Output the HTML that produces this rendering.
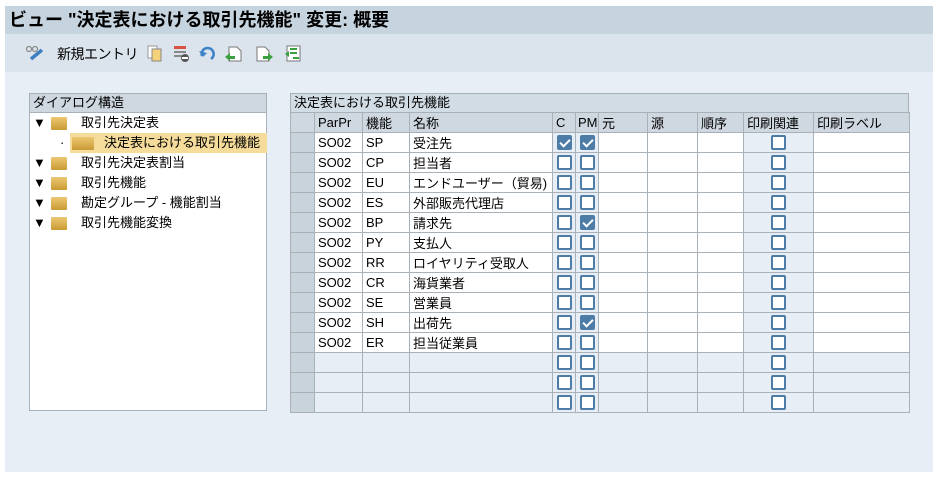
<!DOCTYPE html><html><head><meta charset="utf-8"><style>
*{box-sizing:border-box;margin:0;padding:0}
body{width:940px;height:487px;background:#fff;font-family:"Liberation Sans","Noto Sans CJK JP",sans-serif;position:relative;overflow:hidden;font-size:13px;color:#000}
.main{position:absolute;left:5px;top:6px;width:928px;height:466px;background:#e8eef5}
.title{position:absolute;left:5px;top:6px;width:928px;height:28px;background:#c6d4e0;font-weight:bold;font-size:18px;line-height:28px;padding-left:4px}
.tb{position:absolute;left:5px;top:34px;width:928px;height:38px;background:#dbe4ec}
.lp{position:absolute;left:29px;top:93px;width:238px;height:318px;background:#fff;border:1px solid #a9b1b8}
.lh{height:19px;background:#cfd8e0;border-bottom:1px solid #a9b1b8;line-height:18px;padding-left:3px}
.tr{position:absolute;height:20px;line-height:20px;white-space:nowrap}
.fold{position:absolute;width:16px;height:13px;background:linear-gradient(#ecc872,#c99a35);border-radius:1px;top:4px}
.rp{position:absolute;left:290px;top:93px;width:619px}
.rh{height:19px;background:#d2dce5;border:1px solid #a9b1b8;border-bottom:none;line-height:18px;padding-left:3px}
table{border-collapse:collapse;table-layout:fixed;width:619px}
td{border:1px solid #a9b1b8;height:20px;padding:0 3px;white-space:nowrap;overflow:hidden;background:#fff}
tr.h td{height:19px;background:#cfd8e0}
td.s{background:#c9d3dc}
td.c{background:#e8eef5;text-align:center;padding:0}
tr.e td{background:#e8eef5}
tr.e td.s{background:#c9d3dc}
.cb{display:inline-block;width:15px;height:15px;border:2px solid #4d7ca6;border-radius:2px;vertical-align:middle;margin-top:-2px;background:#fff}
.ck{background:#4d7ca6;position:relative}
.ck:after{content:"";position:absolute;left:3px;top:0px;width:4px;height:8px;border:solid #fff;border-width:0 2px 2px 0;transform:rotate(45deg)}
</style></head><body>
<div class="main"></div>
<div class="title">ビュー "決定表における取引先機能" 変更: 概要</div>
<div class="tb">
<svg style="position:absolute;left:20px;top:11px" width="22" height="16"><circle cx="4" cy="4" r="2.5" fill="none" stroke="#888" stroke-width="1.2"/><circle cx="10" cy="4" r="2.5" fill="none" stroke="#888" stroke-width="1.2"/><path d="M6 14 L17 5" stroke="#3d7fc1" stroke-width="3.5"/></svg>
<div style="position:absolute;left:52px;top:10px;font-size:14px;letter-spacing:-0.5px">新規エントリ</div>
<svg style="position:absolute;left:142px;top:10px" width="160" height="20">
<rect x="1" y="2" width="9" height="12" fill="#fff" stroke="#999"/><rect x="5" y="5" width="9" height="12" fill="#f3d27a" stroke="#888"/>
<rect x="27" y="2" width="12" height="3" fill="#d9533e"/><rect x="27" y="7" width="12" height="2" fill="#888"/><rect x="27" y="11" width="8" height="2" fill="#888"/><circle cx="38" cy="14" r="4" fill="#555"/><rect x="35" y="13" width="6" height="2" fill="#fff"/>
<path d="M55 12 A6 6 0 1 1 64 15" fill="none" stroke="#3d82c8" stroke-width="2.5"/><path d="M52 7 L56 13 L60 9Z" fill="#3d82c8"/>
<path d="M82 3 H90 L94 7 V17 H82Z" fill="#fff" stroke="#777"/><path d="M78 13 L83 9 V17Z" fill="#3aa040"/><rect x="82" y="12" width="6" height="3" fill="#3aa040"/>
<path d="M110 3 H118 L122 7 V17 H110Z" fill="#fff" stroke="#777"/><path d="M126 13 L121 9 V17Z" fill="#3aa040"/><rect x="116" y="12" width="6" height="3" fill="#3aa040"/>
<rect x="140" y="2" width="13" height="15" fill="#fff" stroke="#777"/><path d="M143 5 H150 M143 9 H150 M146 14 H152" stroke="#3aa040" stroke-width="2"/><path d="M138 10 L142 7 V13Z" fill="#3aa040"/>
</svg>
</div>
<div class="lp"><div class="lh">ダイアログ構造</div>
<div class="tr" style="left:3px;top:19px">▼<span class="fold" style="left:18px"></span><span style="position:absolute;left:48px">取引先決定表</span></div>
<div class="tr" style="left:30px;top:39px">·</div>
<div class="tr" style="left:40px;top:39px;width:197px;background:#f5dc9a"><span class="fold" style="left:2px;width:22px"></span><span style="position:absolute;left:34px">決定表における取引先機能</span></div>
<div class="tr" style="left:3px;top:59px">▼<span class="fold" style="left:18px"></span><span style="position:absolute;left:48px">取引先決定表割当</span></div>
<div class="tr" style="left:3px;top:79px">▼<span class="fold" style="left:18px"></span><span style="position:absolute;left:48px">取引先機能</span></div>
<div class="tr" style="left:3px;top:99px">▼<span class="fold" style="left:18px"></span><span style="position:absolute;left:48px">勘定グループ - 機能割当</span></div>
<div class="tr" style="left:3px;top:119px">▼<span class="fold" style="left:18px"></span><span style="position:absolute;left:48px">取引先機能変換</span></div>
</div>
<div class="rp"><div class="rh">決定表における取引先機能</div>
<table>
<colgroup><col style="width:24px"><col style="width:48px"><col style="width:47px"><col style="width:143px"><col style="width:23px"><col style="width:23px"><col style="width:49px"><col style="width:50px"><col style="width:46px"><col style="width:70px"><col style="width:96px"></colgroup>
<tr class="h"><td class="s"></td><td>ParPr</td><td>機能</td><td>名称</td><td>C</td><td style="padding:0 2px">PM</td><td>元</td><td>源</td><td>順序</td><td>印刷関連</td><td>印刷ラベル</td></tr>
<tr><td class="s"></td><td>SO02</td><td>SP</td><td>受注先</td><td class="c"><span class="cb ck"></span></td><td class="c"><span class="cb ck"></span></td><td></td><td></td><td></td><td class="c"><span class="cb"></span></td><td></td></tr>
<tr><td class="s"></td><td>SO02</td><td>CP</td><td>担当者</td><td class="c"><span class="cb"></span></td><td class="c"><span class="cb"></span></td><td></td><td></td><td></td><td class="c"><span class="cb"></span></td><td></td></tr>
<tr><td class="s"></td><td>SO02</td><td>EU</td><td>エンドユーザー（貿易)</td><td class="c"><span class="cb"></span></td><td class="c"><span class="cb"></span></td><td></td><td></td><td></td><td class="c"><span class="cb"></span></td><td></td></tr>
<tr><td class="s"></td><td>SO02</td><td>ES</td><td>外部販売代理店</td><td class="c"><span class="cb"></span></td><td class="c"><span class="cb"></span></td><td></td><td></td><td></td><td class="c"><span class="cb"></span></td><td></td></tr>
<tr><td class="s"></td><td>SO02</td><td>BP</td><td>請求先</td><td class="c"><span class="cb"></span></td><td class="c"><span class="cb ck"></span></td><td></td><td></td><td></td><td class="c"><span class="cb"></span></td><td></td></tr>
<tr><td class="s"></td><td>SO02</td><td>PY</td><td>支払人</td><td class="c"><span class="cb"></span></td><td class="c"><span class="cb"></span></td><td></td><td></td><td></td><td class="c"><span class="cb"></span></td><td></td></tr>
<tr><td class="s"></td><td>SO02</td><td>RR</td><td>ロイヤリティ受取人</td><td class="c"><span class="cb"></span></td><td class="c"><span class="cb"></span></td><td></td><td></td><td></td><td class="c"><span class="cb"></span></td><td></td></tr>
<tr><td class="s"></td><td>SO02</td><td>CR</td><td>海貨業者</td><td class="c"><span class="cb"></span></td><td class="c"><span class="cb"></span></td><td></td><td></td><td></td><td class="c"><span class="cb"></span></td><td></td></tr>
<tr><td class="s"></td><td>SO02</td><td>SE</td><td>営業員</td><td class="c"><span class="cb"></span></td><td class="c"><span class="cb"></span></td><td></td><td></td><td></td><td class="c"><span class="cb"></span></td><td></td></tr>
<tr><td class="s"></td><td>SO02</td><td>SH</td><td>出荷先</td><td class="c"><span class="cb"></span></td><td class="c"><span class="cb ck"></span></td><td></td><td></td><td></td><td class="c"><span class="cb"></span></td><td></td></tr>
<tr><td class="s"></td><td>SO02</td><td>ER</td><td>担当従業員</td><td class="c"><span class="cb"></span></td><td class="c"><span class="cb"></span></td><td></td><td></td><td></td><td class="c"><span class="cb"></span></td><td></td></tr>
<tr class="e"><td class="s"></td><td></td><td></td><td></td><td class="c"><span class="cb"></span></td><td class="c"><span class="cb"></span></td><td></td><td></td><td></td><td class="c"><span class="cb"></span></td><td></td></tr>
<tr class="e"><td class="s"></td><td></td><td></td><td></td><td class="c"><span class="cb"></span></td><td class="c"><span class="cb"></span></td><td></td><td></td><td></td><td class="c"><span class="cb"></span></td><td></td></tr>
<tr class="e"><td class="s"></td><td></td><td></td><td></td><td class="c"><span class="cb"></span></td><td class="c"><span class="cb"></span></td><td></td><td></td><td></td><td class="c"><span class="cb"></span></td><td></td></tr>
</table></div>
</body></html>
